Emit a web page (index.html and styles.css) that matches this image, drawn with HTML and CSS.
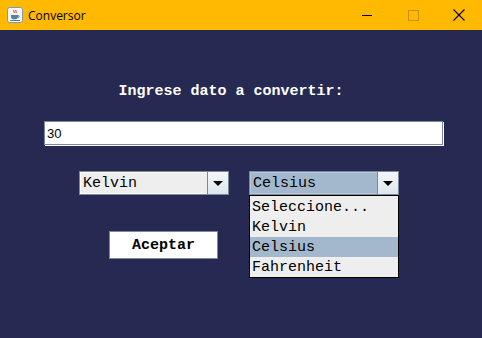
FILE: index.html
```html
<!DOCTYPE html>
<html>
<head>
<meta charset="utf-8">
<link rel="stylesheet" href="styles.css">
</head>
<body>
<div class="window">
  <div class="titlebar">
    <div class="title-left">
      <svg class="app-icon" width="16" height="16" viewBox="0 0 16 16">
        <rect x="0.5" y="0.5" width="15" height="15" rx="2" fill="#f4f6f8" stroke="#8a96a3"/>
        <path d="M7 3c-1 1 1 2 0 3M9 3c-1 1 1 2 0 3" stroke="#e2231a" stroke-width="1" fill="none"/>
        <path d="M4 8h7v2c0 1.5-1.5 2.5-3.5 2.5S4 11.5 4 10z" fill="#5382a1"/>
        <path d="M11 8.5c1.5 0 1.5 2 0 2" stroke="#5382a1" fill="none"/>
        <path d="M3 13.5h10" stroke="#5382a1"/>
      </svg>
      <span class="title">Conversor</span>
    </div>
    <div class="controls">
      <span class="ctl min"></span>
      <span class="ctl max"></span>
      <span class="ctl close">
        <svg width="12" height="12" viewBox="0 0 12 12"><path d="M0.5 0.5l11 11M11.5 0.5l-11 11" stroke="#000" stroke-width="1.1"/></svg>
      </span>
    </div>
  </div>
  <div class="content">
    <div class="prompt">Ingrese dato a convertir:</div>
    <div class="field">30</div>
    <div class="combos">
      <div class="combo">
        <div class="combo-value">Kelvin</div>
        <div class="combo-btn"><span class="tri"></span></div>
      </div>
      <div class="combo combo-open">
        <div class="combo-value sel">Celsius</div>
        <div class="combo-btn"><span class="tri"></span></div>
        <ul class="popup">
          <li>Seleccione...</li>
          <li>Kelvin</li>
          <li class="sel">Celsius</li>
          <li>Fahrenheit</li>
        </ul>
      </div>
    </div>
    <div class="btn">Aceptar</div>
  </div>
</div>
</body>
</html>
```

FILE: styles.css
```css
html, body {
  margin: 0;
  padding: 0;
}
body {
  width: 482px;
  height: 338px;
  overflow: hidden;
  background: #262951;
  font-family: "Courier New", "Liberation Mono", monospace;
}
.window {
  display: flex;
  flex-direction: column;
  height: 338px;
}
.titlebar {
  height: 30px;
  background: #ffb900;
  display: flex;
  align-items: center;
  justify-content: space-between;
  flex-shrink: 0;
}
.title-left {
  display: flex;
  align-items: center;
  padding-left: 7px;
}
.app-icon {
  display: block;
}
.title {
  font-family: "Open Sans", "Liberation Sans", sans-serif;
  font-size: 12px;
  color: #000;
  margin-left: 5px;
}
.controls {
  display: flex;
  height: 30px;
}
.ctl {
  width: 46px;
  height: 30px;
  display: flex;
  align-items: center;
  justify-content: center;
}
.min::before {
  content: "";
  width: 10px;
  height: 1px;
  background: #000;
}
.max::before {
  content: "";
  width: 9px;
  height: 9px;
  border: 1px solid #c98f00;
}
.close svg {
  display: block;
}
.content {
  flex: 1;
  position: relative;
}
.prompt {
  margin-top: 53px;
  width: 462px;
  text-align: center;
  color: #ffffff;
  font-weight: bold;
  font-size: 15px;
  line-height: 18px;
}
.field {
  margin: 20px 0 0 44px;
  height: 22px;
  background: #fff;
  border: 1px solid #7a8a9c;
  box-shadow: 1px 1px 0 #ffffff;
  font-family: "Liberation Sans", Arial, sans-serif;
  font-size: 13px;
  line-height: 23px;
  padding-left: 2px;
  box-sizing: content-box;
  width: 395px;
  color: #000;
}
.combos {
  display: flex;
  gap: 20px;
  margin: 26px 0 0 79px;
}
.combo {
  width: 150px;
  height: 24px;
  display: flex;
  position: relative;
  box-sizing: border-box;
  border: 1px solid #7a8a9c;
}
.combo-value {
  flex: 1;
  background: #eeeeee;
  font-size: 15px;
  line-height: 22px;
  padding-left: 2px;
  color: #000;
  border: 1px solid #ffffff;
  border-right: none;
}
.combo-value.sel {
  background: #a3b8cc;
  border-color: #b8c8d8;
}
.combo-btn {
  width: 20px;
  border-left: 1px solid #7a8a9c;
  background: linear-gradient(#f4f7fa, #dde6ee);
  display: flex;
  align-items: center;
  justify-content: center;
}
.tri {
  width: 0;
  height: 0;
  border-left: 5px solid transparent;
  border-right: 5px solid transparent;
  border-top: 5px solid #000;
  margin-top: 1px;
}
.popup {
  position: absolute;
  top: 23px;
  left: -1px;
  width: 150px;
  margin: 0;
  padding: 1px 0 0 0;
  list-style: none;
  box-sizing: border-box;
  background: #eeeeee;
  border: 1px solid #000;
}
.popup li {
  height: 20px;
  line-height: 21px;
  font-size: 15px;
  padding-left: 2px;
  color: #000;
}
.popup li.sel {
  background: #a3b8cc;
}
.btn {
  margin: 36px 0 0 109px;
  width: 109px;
  height: 28px;
  box-sizing: border-box;
  background: #fff;
  border: 1px solid #7a8a9c;
  font-weight: bold;
  font-size: 15px;
  line-height: 27px;
  text-align: center;
  color: #000;
}
```
